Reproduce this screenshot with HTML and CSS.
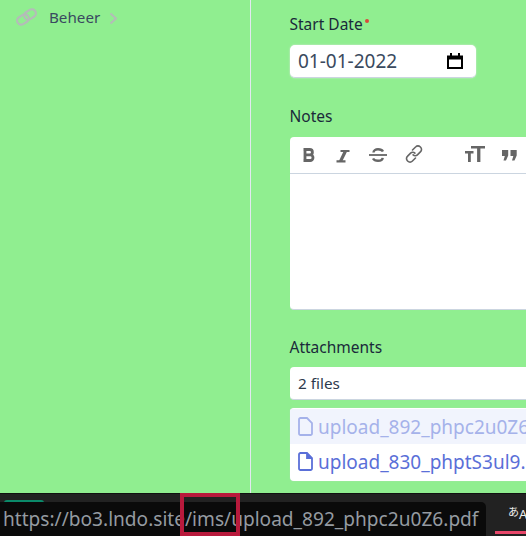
FILE: index.html
```html
<!DOCTYPE html>
<html lang="nl">
<head>
<meta charset="utf-8">
<title>Start Date</title>
<link rel="stylesheet" href="styles.css">
</head>
<body>
<div class="page">
  <div class="content">
    <aside class="sidebar">
      <div class="nav-item">
        <svg class="nav-icon" viewBox="0 0 22 18" width="22" height="18" fill="none" stroke="#b4bcb8" stroke-width="2.200"><rect x="1.800" y="7.500" width="12.400" height="8" rx="4" transform="rotate(-32 8 11.500)"/><rect x="8.800" y="2.500" width="12.400" height="8" rx="4" transform="rotate(-32 15 6.500)"/></svg>
        <span class="nav-text">Beheer</span>
        <svg class="nav-chevron" viewBox="0 0 9 13" width="9" height="13" fill="none" stroke="#b4bcb8" stroke-width="2"><path d="M1.500 1.500 7 6.500 1.500 11.500"/></svg>
      </div>
    </aside>
    <main class="main">
      <div class="label label-first">Start Date<span class="req"></span></div>
      <div class="date-input">
        <span>01-01-2022</span>
        <svg viewBox="0 0 18 18" width="18" height="18" fill="none" stroke="#000"><path stroke-width="2" d="M2 4.500h14v11.500H2z"/><path stroke-width="3" d="M2 6h14"/><path stroke-width="2" d="M5 1v3M13 1v3"/></svg>
      </div>
      <div class="label label-notes">Notes</div>
      <div class="editor">
        <div class="toolbar">
          <svg class="tool" viewBox="0 0 14 14" width="14" height="14" fill="none" stroke="#666" stroke-width="2.800"><path d="M3 1.500v11M1.500 1.500h6.200a2.700 2.700 0 0 1 0 5.400H3h5.200a2.800 2.800 0 0 1 0 5.600H1.500"/></svg>
          <svg class="tool tool-i" viewBox="0 0 14 14" width="14" height="14" fill="none" stroke="#666"><path stroke-width="2.200" d="M4.500 2h9M.5 12.400h9"/><path stroke-width="3.200" d="M9.500 2 4.500 12.400"/></svg>
          <svg class="tool tool-s" viewBox="0 0 18 14" width="18" height="14" fill="none" stroke="#666"><path stroke-width="1.800" d="M0 7h18"/><path stroke-width="2.400" d="M14 3.500C13 1.800 11 1.300 9 1.300 6.500 1.300 4.500 2.500 4.500 4.500M4 10.500c1 1.700 3 2.300 5 2.300 2.500 0 4.500-1 4.700-3"/></svg>
          <svg class="tool tool-l" viewBox="0 0 18 18" width="18" height="18" fill="none" stroke="#666" stroke-width="1.600" stroke-linecap="round"><path d="M7.500 5 10.800 1.800a3 3 0 0 1 4.300 0l.5 .5a3 3 0 0 1 0 4.300l-3.200 3.300a3 3 0 0 1-4.300 0"/><path d="M10.500 13 7.200 16.200a3 3 0 0 1-4.300 0l-.5-.5a3 3 0 0 1 0-4.300l3.200-3.300a3 3 0 0 1 4.300 0"/></svg>
          <svg class="tool tool-t" viewBox="0 0 20 16" width="20" height="16" fill="#666"><path d="M6 0h14v2.600h-4.600V16h-3.300V2.600H6z"/><path d="M0 5h8.500v2.500H5.800V16H3V7.500H0z"/></svg>
          <svg class="tool tool-q" viewBox="0 0 15 12" width="15" height="12" fill="#666"><path d="M0 1h6.200v5.500L4 11.500H1.500L2.800 7H0z"/><path d="M8.500 1h6.200v5.500l-2.200 5H10L11.300 7H8.500z"/></svg>
        </div>
        <div class="editor-body"></div>
      </div>
      <div class="label label-attach">Attachments</div>
      <div class="files-input">2 files</div>
      <ul class="file-list">
        <li class="file file-hover">
          <svg viewBox="0 0 15 19" width="15" height="19" fill="none" stroke="currentColor" stroke-width="1.800"><path d="M2.500 1h6.500l5 5v10.500a1.500 1.500 0 0 1-1.500 1.500h-10a1.500 1.500 0 0 1-1.500-1.500v-14a1.500 1.500 0 0 1 1.500-1.500z"/></svg>
          <a>upload_892_phpc2u0Z6.pdf</a>
        </li>
        <li class="file">
          <svg viewBox="0 0 15 19" width="15" height="19" fill="none" stroke="currentColor" stroke-width="1.800"><path d="M2.500 1h6.500l5 5v10.500a1.500 1.500 0 0 1-1.500 1.500h-10a1.500 1.500 0 0 1-1.500-1.500v-14a1.500 1.500 0 0 1 1.500-1.500z"/><path d="M9 1v5h5" fill="currentColor"/></svg>
          <a>upload_830_phptS3ul9.pdf</a>
        </li>
      </ul>
    </main>
  </div>
  <footer class="taskbar">
    <span class="task-tab"></span>
    <div class="lang"><span class="lang-a">あ</span><span class="lang-b">A</span></div>
    <div class="lang-line"></div>
  </footer>
  <div class="url-tip">https://bo3.lndo.site/ims/upload_892_phpc2u0Z6.pdf</div>
  <div class="highlight"></div>
</div>
</body>
</html>
```
FILE: styles.css
```css
* { box-sizing: border-box; }
html, body { margin: 0; padding: 0; }
body { font-family: "Noto Sans", sans-serif; }
.page { position: relative; width: 526px; height: 536px; overflow: hidden; display: flex; flex-direction: column; background: #222; }
.content { height: 493px; display: flex; background: #90ee90; overflow: hidden; flex: none; }
.sidebar { width: 251px; flex: none; border-right: 1px solid #e2e8f0; padding: 8px 0 0 15px; }
.nav-item { display: flex; align-items: center; height: 18px; }
.nav-icon { flex: none; }
.nav-text { margin-left: 12px; font-size: 15.200px; color: #3a4a60; }
.nav-chevron { margin-left: 9px; margin-top: 3px; flex: none; }
.main { flex: none; width: 275px; padding-left: 39px; }
.label { font-size: 15.500px; line-height: 20px; color: #1a2a3a; font-weight: 400; margin-left: -0.500px; }
.label-first { margin-top: 14px; }
.req { display: inline-block; width: 4px; height: 4px; margin: 0 0 9px 2px; border-radius: 50%; background: #d9483b; vertical-align: middle; }
.date-input { margin-top: 11px; width: 186px; height: 33px; background: #fff; border-radius: 5px; border-bottom: 1px solid #cbd5e0; box-shadow: 0 0 2px #dfe8e2; display: flex; align-items: center; justify-content: space-between; padding: 0 12px 0 8px; font-size: 19px; color: #3a4a5e; }
.label-notes { margin-top: 28px; }
.editor { margin-top: 11px; width: 260px; height: 173px; background: #fff; border-radius: 4px 0 0 4px; border-bottom: 1px solid #cbd5e0; }
.toolbar { height: 37px; border-bottom: 1px solid #cbd5e0; display: flex; align-items: center; padding-left: 12px; }
.tool { flex: none; }
.tool-i { margin-left: 20px; margin-top: 1px; }
.tool-s { margin-left: 19px; }
.tool-l { margin-left: 18px; margin-top: -2px; }
.tool-t { margin-left: 42px; margin-top: -3px; }
.tool-q { margin-left: 17px; }
.label-attach { margin-top: 27px; }
.files-input { margin-top: 10px; width: 260px; height: 33px; background: #fff; border-radius: 4px 0 0 4px; border-bottom: 1px solid #cbd5e0; padding-left: 8px; display: flex; align-items: center; font-size: 15.300px; color: #2d3a4d; }
.file-list { list-style: none; margin: 8px 0 0; padding: 1px 0; width: 260px; height: 73px; background: #fff; border-radius: 4px 0 0 4px; box-shadow: 0 0 1px #c5d0d8; overflow: hidden; }
.file { height: 35px; display: flex; align-items: center; padding-left: 8px; gap: 5px; color: #5a6fd8; font-size: 19px; white-space: nowrap; }
.file svg { flex: none; }
.file-hover { background: #f1f4fd; color: #a5b2ea; }
.taskbar { height: 43px; flex: none; background: #222; position: relative; border-top: 1px solid #111; }
.task-tab { position: absolute; left: 4px; top: 6px; width: 40px; height: 3px; background: #0b8a6a; border-radius: 3px 3px 0 0; }
.lang { position: absolute; left: 508px; top: 8px; color: #eee; white-space: nowrap; }
.lang-a { font-family: "Noto Sans CJK JP", sans-serif; font-size: 11px; position: relative; top: -3px; }
.lang-b { font-size: 13px; }
.lang-line { position: absolute; left: 495px; right: 0; top: 37px; height: 3px; background: #e8476a; }
.url-tip { position: absolute; left: 0; top: 502px; width: 486px; height: 34px; padding: 4px 0 0 3px; background: #0a0a0a; border-radius: 0 5px 0 0; color: #959ba1; font-size: 19.100px; line-height: 26px; white-space: nowrap; }
.highlight { position: absolute; left: 180px; top: 493px; width: 60px; height: 43px; border: 4px solid #b81a3c; }
```
